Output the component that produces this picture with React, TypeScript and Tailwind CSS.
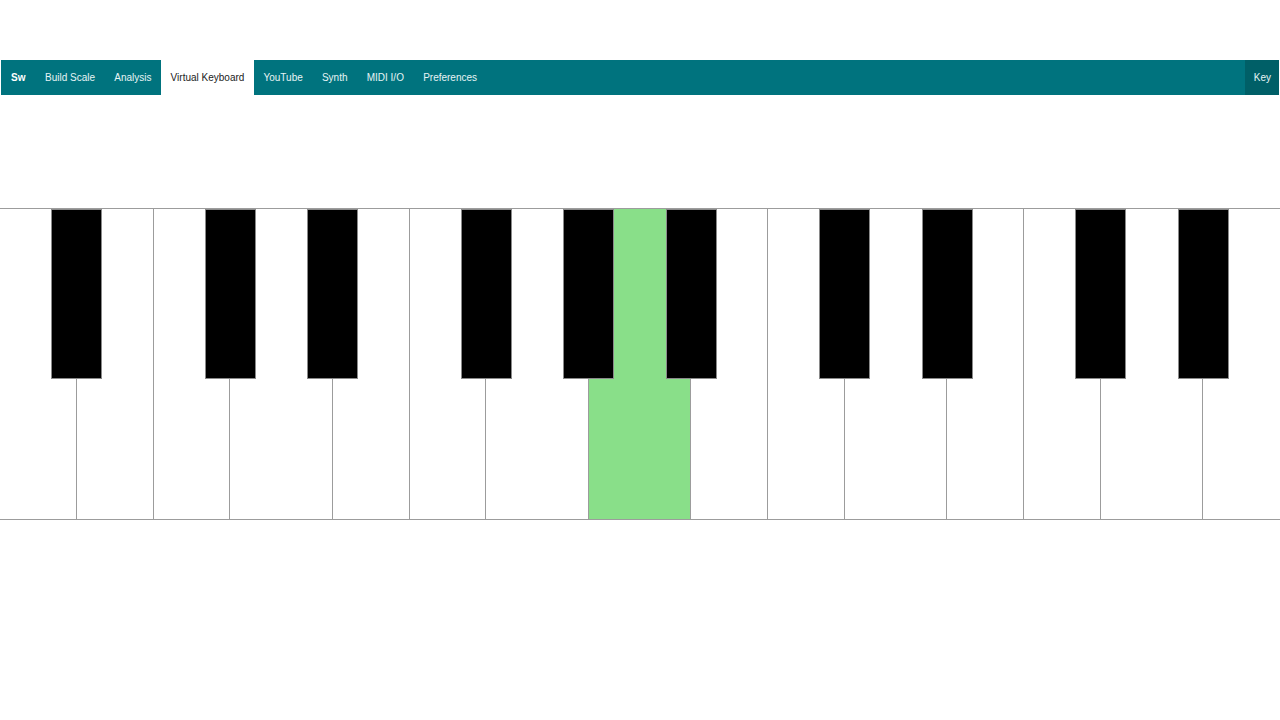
import React from 'react';

const tabs = [
  { label: 'Build Scale' },
  { label: 'Analysis' },
  { label: 'Virtual Keyboard', active: true },
  { label: 'YouTube' },
  { label: 'Synth' },
  { label: 'MIDI I/O' },
  { label: 'Preferences' },
];

// keyboard grid: 50 half-semitone columns, A to A
const whiteKeys = [
  { note: 'A3', cls: 'col-start-1 col-span-3' },
  { note: 'B3', cls: 'col-start-4 col-span-3' },
  { note: 'C4', cls: 'col-start-7 col-span-3' },
  { note: 'D4', cls: 'col-start-10 col-span-4' },
  { note: 'E4', cls: 'col-start-14 col-span-3' },
  { note: 'F4', cls: 'col-start-17 col-span-3' },
  { note: 'G4', cls: 'col-start-20 col-span-4' },
  { note: 'A4', cls: 'col-start-24 col-span-4', on: true },
  { note: 'B4', cls: 'col-start-28 col-span-3' },
  { note: 'C5', cls: 'col-start-31 col-span-3' },
  { note: 'D5', cls: 'col-start-34 col-span-4' },
  { note: 'E5', cls: 'col-start-38 col-span-3' },
  { note: 'F5', cls: 'col-start-41 col-span-3' },
  { note: 'G5', cls: 'col-start-44 col-span-4' },
  { note: 'A5', cls: 'col-start-48 col-span-3', last: true },
];

const blackKeys = [
  { note: 'A#3', cls: 'col-start-3' },
  { note: 'C#4', cls: 'col-start-9' },
  { note: 'D#4', cls: 'col-start-13' },
  { note: 'F#4', cls: 'col-start-19' },
  { note: 'G#4', cls: 'col-start-23' },
  { note: 'A#4', cls: 'col-start-27' },
  { note: 'C#5', cls: 'col-start-33' },
  { note: 'D#5', cls: 'col-start-37' },
  { note: 'F#5', cls: 'col-start-43' },
  { note: 'G#5', cls: 'col-start-47' },
];

function NavBar() {
  return (
    <nav className="flex h-[35px] items-stretch bg-[#00737e] text-[10px] text-white">
      <div className="flex items-center px-[10px] font-bold">Sw</div>
      {tabs.map((t) => (
        <div
          key={t.label}
          className={
            t.active
              ? 'flex items-center bg-white px-[9.5px] text-[#222]'
              : 'flex items-center px-[9.6px] text-[#e6f4f5]'
          }
        >
          {t.label}
        </div>
      ))}
      <div className="flex-1" />
      <div className="flex items-center bg-[#005f67] pl-[9px] pr-[8px] text-[#e6f4f5]">Key</div>
    </nav>
  );
}

function Keyboard() {
  return (
    <div className="grid h-[312px] grid-cols-50 grid-rows-[170px_1fr] border-y border-[#9c9c9c]">
      {whiteKeys.map((k) => (
        <div
          key={k.note}
          className={
            k.cls +
            ' row-start-1 row-span-2 ' +
            (k.on ? 'bg-[#89df89] ' : 'bg-white ') +
            (k.last ? '' : 'border-r border-[#9c9c9c]')
          }
        />
      ))}
      {blackKeys.map((k) => (
        <div
          key={k.note}
          className={k.cls + ' z-10 col-span-2 row-start-1 row-span-1 border border-[#8a8a8a] bg-black'}
        />
      ))}
    </div>
  );
}

export default function App() {
  return (
    <div className="min-h-[720px] bg-white pt-[60px] font-['Liberation_Sans',Arial,sans-serif]">
      <div className="px-[1px]">
        <NavBar />
      </div>
      <div className="mt-[113px]">
        <Keyboard />
      </div>
    </div>
  );
}
